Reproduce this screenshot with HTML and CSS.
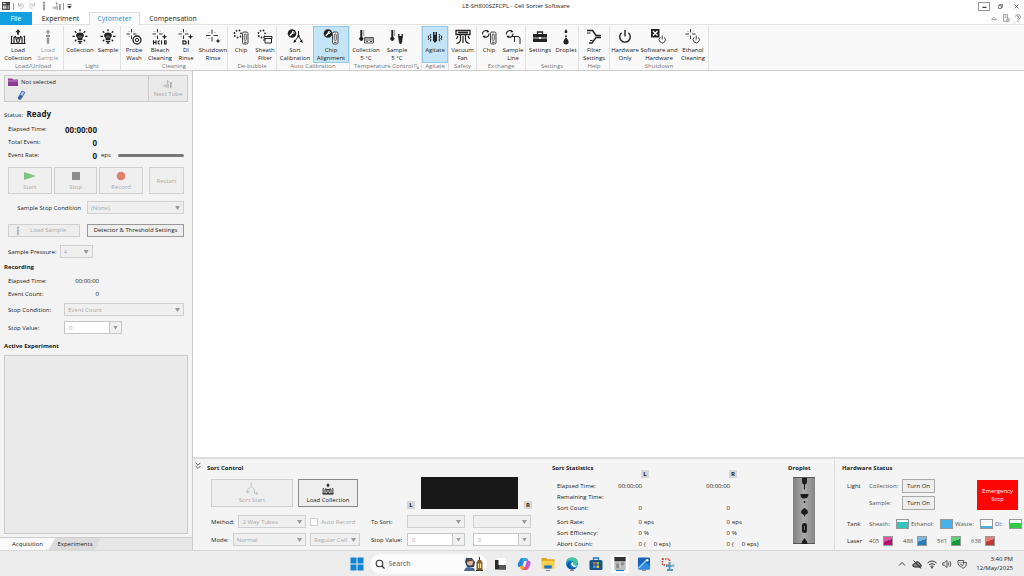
FILE: index.html
```html
<!DOCTYPE html>
<html lang="en">
<head>
<meta charset="utf-8">
<title>LE-SH800SZFCPL - Cell Sorter Software</title>
<link rel="stylesheet" href="styles.css">
</head>
<body>
<svg class="defs" width="0" height="0" aria-hidden="true">
  <symbol id="spark" viewBox="0 0 16 16"><path d="M5.500 0v3.500M5.500 6.500V10M.5 5h3.500M7 5h3.500" fill="none" stroke="#333" stroke-width="1"/><path d="M2.500 2l.8.8M8.500 2l-.8.8M2.500 8l.8-.8" stroke="#666" stroke-width=".8"/></symbol>
  <symbol id="bulb" viewBox="0 0 16 16"><path d="M8 3.500c4.200 0 5 3.600 2.400 5.600v2H5.600v-2C3 7.100 3.800 3.500 8 3.500z" fill="#222"/><path d="M7 9V6.500M9 9V6.500" stroke="#ddd" stroke-width=".6"/><path d="M5.800 12.300h4.400M6.700 14h2.600M8 .3v2M2.800 2.300l1.500 1.500M13.200 2.300l-1.500 1.500M.5 7.300h2.400M13.100 7.300h2.400M2.800 12.300l1.500-1.500M13.200 12.300l-1.500-1.500" stroke="#222" stroke-width="1.300"/></symbol>
  <symbol id="dots" viewBox="0 0 16 16"><g fill="#222"><circle cx="1.500" cy="4" r=".9"/><circle cx="3.500" cy="1.800" r=".9"/><circle cx="6.500" cy="1.500" r=".9"/><circle cx="1.800" cy="7" r=".9"/><circle cx="4.500" cy="8.500" r=".9"/><circle cx="7.500" cy="7.500" r=".9"/><circle cx="8" cy="4.300" r=".9"/></g></symbol>
  <symbol id="chip" viewBox="0 0 16 16"><rect x="9.500" y="3" width="5.500" height="12" rx="1.500" fill="#eee" stroke="#444" stroke-width="1"/><rect x="11.300" y="5" width="2" height="6.500" rx="1" fill="none" stroke="#444" stroke-width=".8"/><path d="M11 13.300h2.600" stroke="#444"/></symbol>
  <symbol id="wrench" viewBox="0 0 16 16"><circle cx="5" cy="4.500" r="4.300" fill="#222"/><path d="M2.800 6.700l2.700-2.700" stroke="#fff" stroke-width="1.300"/><circle cx="6.200" cy="3.400" r="1.400" fill="#fff"/><path d="M6.200 3.400l1.600-1.600" stroke="#222"/></symbol>
  <symbol id="cycle" viewBox="0 0 16 16"><path d="M1.500 5.500a3.300 3.300 0 0 1 5.500-3M8 4.500a3.300 3.300 0 0 1-5.200 3" stroke="#222" stroke-width="1.100" fill="none"/><path d="M6.200.8l2.300 2.200-3 .6zM3.500 9.300L1.300 7l3-.5z" fill="#222"/></symbol>
  <symbol id="power" viewBox="0 0 16 16"><path d="M4.600 3.800a5.300 5.300 0 1 0 6.800 0M8 1v6.500" fill="none" stroke="#222" stroke-width="1.400"/></symbol>
  <symbol id="rack" viewBox="0 0 16 16"><path d="M8 .3l2.700 3H8.900v2.500H7.100V3.300H5.300z" fill="#222"/><path d="M2.500 7.300h-1v7.200h13V7.300h-1M4 14V8.500l1.500-1 1.800 6.300M12 14V8.500l-1.500-1-1.800 6.300M7 8l1 2 1-2M.5 14.500h15" fill="none" stroke="#222" stroke-width="1.200"/></symbol>
  <symbol id="tube" viewBox="0 0 16 16"><path d="M8 .5l2.600 2.900H5.400zM7.300 3h1.400v2.500H7.300z" fill="currentColor"/><path d="M6 6h4v2H6zM6.700 8.500h2.600v5.500L8 15.500 6.700 14z" fill="currentColor"/></symbol>
  <symbol id="nexttube" viewBox="0 0 16 16"><path d="M0 11h5M3.500 9l2 2-2 2M6.500 14V8h2v6M7.500 7V3" fill="none" stroke="currentColor" stroke-width="1.200"/><path d="M5.500 4L7.500 1.500 9.500 4zM10.500 5h4v1.500h-.7V13l-1.300 2-1.300-2V6.500h-.7z" fill="currentColor"/></symbol>
  <symbol id="plus" viewBox="0 0 16 16"><path d="M12.500 5l.8 2 2 .8-2 .8-.8 2-.8-2-2-.8 2-.8z" fill="#222"/></symbol>
  <symbol id="thermo" viewBox="0 0 16 16"><path d="M2.300 1h2v7a2 2 0 1 1-2 0z" fill="#222"/><path d="M5 2h1.300M5 4h1.300M5 6h1.300" stroke="#222" stroke-width=".7"/></symbol>
</svg>

<header>
  <div class="titlebar">
    <div class="quick">
      <svg class="i8" viewBox="0 0 10 10"><path d="M0 0h10v10H0z" fill="#444"/><path d="M1 4h5v5H1zM7 4h2v5H7z" fill="#999"/><path d="M2 5v3M4 6v2M1 2h4" stroke="#fff"/></svg>
      <i class="bar"></i>
      <svg class="i8" viewBox="0 0 10 10"><path d="M2 1v4h4M2 5c2-4 7-3 6 0-.5 2-2 3-4 4" stroke="#aaa" fill="none"/></svg>
      <svg class="i8" viewBox="0 0 10 10"><path d="M8 1v4H4M8 5C6 1 1 2 2 5c.5 2 2 3 4 4" stroke="#bbb" fill="none"/></svg>
      <svg class="i10 grey" viewBox="0 0 16 16"><use href="#tube"/></svg>
      <svg class="i10 grey" viewBox="0 0 16 16"><use href="#nexttube"/></svg>
      <i class="bar last"></i>
      <svg class="i5" viewBox="0 0 6 6"><path d="M.5.500h5M1 2.800h4L3 5z" stroke="#222" stroke-width=".8" fill="#222"/></svg>
    </div>
    <h1>LE-SH800SZFCPL - Cell Sorter Software</h1>
    <div class="winbtns">
      <button class="min" aria-label="Minimize"><svg class="i5" viewBox="0 0 6 6"><path d="M.5 4h5" stroke="#333" stroke-width="1.400"/></svg></button>
      <button aria-label="Restore"><svg class="i5" viewBox="0 0 6 6"><path d="M.5 2h3.500v3.500H.5zM2 2V.5h3.500V4H4" fill="none" stroke="#555" stroke-width=".9"/></svg></button>
      <button aria-label="Close"><svg class="i5" viewBox="0 0 6 6"><path d="M.7.700l4.600 4.600M5.300.700L.7 5.300" stroke="#555"/></svg></button>
    </div>
  </div>
  <nav class="tabs">
    <button class="file">File</button>
    <button class="t1">Experiment</button>
    <button class="t2 active">Cytometer</button>
    <button class="t3">Compensation</button>
    <div class="help">
      <svg class="i8" viewBox="0 0 10 10"><path d="M2 7l3-3 3 3z" fill="none" stroke="#888"/></svg>
      <svg class="i8" viewBox="0 0 10 10"><path d="M2 .5h5V9H2zM3.500 2.500h2M3.500 4.500h2" fill="none" stroke="#888"/><circle cx="7.500" cy="7.500" r="2" fill="#ccc" stroke="#888" stroke-width=".7"/></svg>
      <svg class="i8" viewBox="0 0 10 10"><path d="M3 3.500a2 2 0 1 1 3 1.800L5 6.500M5 8v1.500" fill="none" stroke="#999" stroke-width="3"/><path d="M3 3.500a2 2 0 1 1 3 1.800L5 6.500M5 8v1.200" fill="none" stroke="#fff"/></svg>
    </div>
  </nav>
  <div class="ribbon">
    <section class="group"><div class="btns">
      <button class="w30"><svg viewBox="0 0 16 16"><use href="#rack"/></svg>Load<br>Collection</button>
      <button class="w30" disabled><svg viewBox="0 0 16 16"><use href="#tube"/></svg>Load<br>Sample</button>
    </div><h2>Load/Unload</h2></section>
    <section class="group"><div class="btns">
      <button class="w32"><svg viewBox="0 0 16 16"><use href="#bulb"/></svg>Collection</button>
      <button class="w24"><svg viewBox="0 0 16 16"><use href="#bulb"/></svg>Sample</button>
    </div><h2>Light</h2></section>
    <section class="group"><div class="btns">
      <button class="w26"><svg viewBox="0 0 16 16"><use href="#spark"/><circle cx="11" cy="11" r="4" fill="#f9f9f9" stroke="#222" stroke-width="1.300"/><circle cx="11" cy="11" r="1.600" fill="none" stroke="#222"/></svg>Probe<br>Wash</button>
      <button class="w26"><svg viewBox="0 0 16 16"><use href="#spark"/><use href="#plus"/><path d="M1.500 11.300v4.200M4 11.300v4.200M1.500 13.400H4M7.800 12c-2-.8-2.400 3.300 0 3M9.500 11.300v4.200M12.500 11.800h1.600v3.200h-1.600z" fill="none" stroke="#222" stroke-width="1.100"/></svg>Bleach<br>Cleaning</button>
      <button class="w26"><svg viewBox="0 0 16 16"><use href="#spark"/><use href="#plus"/><path d="M5 11.800V15h1c3 0 3-3.200 0-3.200zM10.500 11.300v4.200" fill="none" stroke="#222" stroke-width="1.200"/></svg>DI<br>Rinse</button>
      <button class="w28"><svg viewBox="0 0 16 16"><path d="M7 .5V5M7 8v4.500M1 6.500h4.500M8.500 6.500H13" stroke="#333"/><path d="M3.500 3l1 1M10.500 3l-1 1M3.500 10l1-1" stroke="#666" stroke-width=".8"/><path d="M13 9.500l.7 1.800 1.800.7-1.800.7-.7 1.800-.7-1.800-1.800-.7 1.800-.7z" fill="#222"/></svg>Shutdown<br>Rinse</button>
    </div><h2>Cleaning</h2></section>
    <section class="group"><div class="btns">
      <button class="w26"><svg viewBox="0 0 16 16"><use href="#dots"/><use href="#chip"/></svg>Chip</button>
      <button class="w22"><svg viewBox="0 0 16 16"><use href="#dots"/><path d="M7 7.500h8v2H7zM8 9.500h6.500V14H8zM6 11h2" fill="#fff" stroke="#222"/></svg>Sheath<br>Filter</button>
    </div><h2>De-bubble</h2></section>
    <section class="group"><div class="btns">
      <button class="w36"><svg viewBox="0 0 16 16"><use href="#wrench"/><path d="M11.500 2v5L8 12M11.500 7l3 5" stroke="#222" fill="none"/><path d="M6.500 14l.5-3.500 2.500 2zM15.800 14l-.6-3.500-2.500 2z" fill="#222"/><circle cx="11.500" cy="7" r="1.200" fill="#222"/></svg>Sort<br>Calibration</button>
      <button class="w36 on" aria-pressed="true"><svg viewBox="0 0 16 16"><use href="#wrench"/><use href="#chip"/></svg>Chip<br>Alignment</button>
    </div><h2>Auto Calibration</h2></section>
    <section class="group"><div class="btns">
      <button class="w32"><svg viewBox="0 0 16 16"><use href="#thermo"/><path d="M6.500 14V8.500h9V14zM8 9v3l1 1 1-1V9M12 9v3l1 1 1-1V9" fill="none" stroke="#444" stroke-width=".9"/></svg>Collection<br>5 °C</button>
      <button class="w30"><svg viewBox="0 0 16 16"><use href="#thermo"/><path d="M9.500 5v2l1 7 1 1 1-1 1-7V5" fill="#222" stroke="#222" stroke-width=".8"/><path d="M10.500 5h2v2h-2z" fill="#fff"/></svg>Sample<br>5 °C</button>
    </div><div class="foot"><h2>Temperature Control</h2><svg class="i5" viewBox="0 0 6 6"><path d="M.5 4V.5H4M2.500 2.500L5 5M5.500 3v2.500H3" fill="none" stroke="#888" stroke-width=".8"/></svg></div></section>
    <section class="group"><div class="btns">
      <button class="w26 on" aria-pressed="true"><svg viewBox="0 0 16 16"><path d="M6 3h4v8.500L8 14l-2-2.500z" fill="#222"/><path d="M8 3v3" stroke="#c4e5f8"/><path d="M4 5L3.200 6.500 4 8l-.8 1.500.8 1.500-.8 1.500M1.800 6.500L1.200 8l.6 1.500-.6 1.500M12 5l.8 1.500L12 8l.8 1.500L12 11l.8 1.500M14.200 6.500l.6 1.500-.6 1.500.6 1.500" stroke="#222" fill="none"/></svg>Agitate</button>
    </div><h2>Agitate</h2></section>
    <section class="group"><div class="btns">
      <button class="w27"><svg viewBox="0 0 16 16"><path d="M1 1.500h14v4H1zM3 3.500h10" fill="none" stroke="#222" stroke-width="1.300"/><path d="M5.500 6v4q0 4-4 4.500M10.500 6v4q0 4 4 4.500M8 7v7M3 7l-1.500 3M13 7l1.500 3" fill="none" stroke="#222" stroke-width="1.200"/></svg>Vacuum<br>Fan</button>
    </div><h2>Safety</h2></section>
    <section class="group"><div class="btns">
      <button class="w24"><svg viewBox="0 0 16 16"><use href="#cycle"/><use href="#chip"/></svg>Chip</button>
      <button class="w24"><svg viewBox="0 0 16 16"><use href="#cycle"/><path d="M6 7.500h7q2 0 2 2V15M9.500 7.500V13" fill="none" stroke="#222"/></svg>Sample<br>Line</button>
    </div><h2>Exchange</h2></section>
    <section class="group"><div class="btns">
      <button class="w28"><svg viewBox="0 0 16 16"><path d="M5.500 5V3h5v2" fill="none" stroke="#222" stroke-width="1.300"/><path d="M1 5h14v8H1z" fill="#222"/><path d="M1 9h14" stroke="#fff" stroke-width=".8"/><path d="M7 8h2v2H7z" fill="#fff"/></svg>Settings</button>
      <button class="w24"><svg viewBox="0 0 16 16"><path d="M8 0c2 3 1.800 4 0 4s-2-1 0-4zM8 5.500l1 2-1 1-1-1z" fill="#222"/><path d="M8 8.500c4 4 3 7 0 7s-4-3 0-7z" fill="#222"/></svg>Droplet</button>
    </div><h2>Settings</h2></section>
    <section class="group"><div class="btns">
      <button class="w30"><svg viewBox="0 0 16 16"><path d="M1 1.500h5.500l3.500 5h5M3 14h3l4-5.500h5" fill="none" stroke="#222" stroke-width="1.400"/><path d="M1 4h3.500M4 11.500h2.500" stroke="#222"/></svg>Filter<br>Settings</button>
    </div><h2>Help</h2></section>
    <section class="group"><div class="btns">
      <button class="w30"><svg viewBox="0 0 16 16"><use href="#power"/></svg>Hardware<br>Only</button>
      <button class="w38"><svg viewBox="0 0 16 16"><path d="M0 0h8.500v8.500H0z" fill="#222"/><path d="M2 2l4.500 4.500M6.500 2L2 6.500" stroke="#fff" stroke-width="1.300"/><use href="#power" x="6.500" y="6" width="9.500" height="9.500"/></svg>Software and<br>Hardware</button>
      <button class="w30"><svg viewBox="0 0 16 16"><use href="#spark"/><use href="#power" x="6.500" y="6" width="9.500" height="9.500"/></svg>Ethanol<br>Cleaning</button>
    </div><h2>Shutdown</h2></section>
  </div>
</header>

<div class="work">
  <aside class="side">
    <div class="tubebox">
      <div class="sel">
        <div class="line"><svg class="i10" viewBox="0 0 10 10"><path d="M0 1.500h4l1 1h5v6.500H0z" fill="#8d3a93"/><path d="M0 4h10" stroke="#c489c8"/></svg>Not selected</div>
        <svg class="i10 blue" viewBox="0 0 10 10"><path d="M6 1l3 1.500L4.500 9.300Q2 10 2.300 7.500z" fill="#aac4e8" stroke="#3c5b9a" stroke-width=".8"/><path d="M4.500 5l2.500 1-2.500 3.300Q2 10 2.300 7.500z" fill="#3c5b9a"/></svg>
      </div>
      <button disabled><svg class="i10" viewBox="0 0 16 16"><use href="#nexttube"/></svg>Next Tube</button>
    </div>
    <div class="status">Status: <strong>Ready</strong></div>
    <dl class="stats">
      <dt>Elapsed Time:</dt><dd class="big">00:00:00</dd><dd></dd>
      <dt>Total Event:</dt><dd class="big">0</dd><dd></dd>
      <dt>Event Rate:</dt><dd class="big">0</dd><dd class="rate">eps<i></i></dd>
    </dl>
    <div class="runbtns">
      <button disabled><svg class="i12" viewBox="0 0 12 12"><path d="M0 2l12 4-12 4z" fill="#7fc584"/></svg>Start</button>
      <button disabled><svg class="i12" viewBox="0 0 12 12"><path d="M2 2h8v8H2z" fill="#8b8b8b"/></svg>Stop</button>
      <button disabled><svg class="i12" viewBox="0 0 12 12"><circle cx="6" cy="6" r="4.300" fill="#dd8068"/></svg>Record</button>
      <button class="restart" disabled>Restart</button>
    </div>
    <div class="row stopcond"><label for="ssc">Sample Stop Condition</label><span class="pick w97"><select id="ssc" disabled><option>(None)</option></select></span></div>
    <div class="row loads">
      <button class="load" disabled><svg class="i10" viewBox="0 0 16 16"><use href="#tube"/></svg>Load Sample</button>
      <button class="det">Detector &amp; Threshold Settings</button>
    </div>
    <div class="row press"><label for="sp">Sample Pressure:</label><span class="pick w33"><select id="sp" disabled><option>4</option></select></span></div>
    <h3>Recording</h3>
    <dl class="rec"><dt>Elapsed Time:</dt><dd>00:00:00</dd><dt>Event Count:</dt><dd>0</dd></dl>
    <div class="recform">
      <label for="sc">Stop Condition:</label><span class="pick"><select id="sc" disabled><option>Event Count</option></select></span>
      <label for="sv">Stop Value:</label><span class="combo w58"><input id="sv" value="0" disabled><button aria-label="Choose value"></button></span>
    </div>
    <h3>Active Experiment</h3>
    <div class="expbox"></div>
    <div class="sidetabs"><button class="a">Acquisition</button><button class="b">Experiments</button></div>
  </aside>

  <div class="right">
    <main></main>
    <div class="dock">
      <button class="fold" aria-label="Collapse"><svg class="i8" viewBox="0 0 10 10"><path d="M2 1l3 3 3-3M2 5l3 3 3-3" fill="none" stroke="#333"/></svg></button>
      <section class="sortctl">
        <h3>Sort Control</h3>
        <div class="scgrid">
          <div class="sc1">
            <div class="bigbtns">
              <button class="start" disabled><svg class="i14" viewBox="0 0 16 16"><path d="M7 1v4M7 5L3 9v3M7 5l4 4v4h3M1.500 10.500L3 13l1.500-2.500M12.500 11.500L15 13l-2.500 1.500" fill="none" stroke="#b5c4be"/></svg>Sort Start</button>
              <button><svg class="i12" viewBox="0 0 16 16"><use href="#rack"/></svg>Load Collection</button>
            </div>
            <div class="row"><label for="me">Method:</label><span class="pick grow"><select id="me" disabled><option>2 Way Tubes</option></select></span><span class="w50"><label class="chk"><input type="checkbox" disabled>Auto Record</label></span></div>
            <div class="row"><label for="mo">Mode:</label><span class="pick grow"><select id="mo" disabled><option>Normal</option></select></span><span class="pick w50"><select aria-label="Cell mode" disabled><option>Regular Cell</option></select></span></div>
          </div>
          <div class="sc2">
            <div class="view"><b class="badge">L</b><div class="screen"></div><b class="badge">R</b></div>
            <div class="row"><label for="ts">To Sort:</label><span class="pick w58"><select id="ts" disabled><option></option></select></span><span class="pick w58"><select aria-label="To sort right" disabled><option></option></select></span></div>
            <div class="row"><label for="sl">Stop Value:</label><span class="combo w58"><input id="sl" value="0" disabled><button aria-label="Choose left value"></button></span><span class="combo w58"><input aria-label="Stop value right" value="0" disabled><button aria-label="Choose right value"></button></span></div>
          </div>
        </div>
      </section>
      <section class="sortstat">
        <h3>Sort Statistics</h3>
        <table>
          <colgroup><col class="c-name"><col class="c-num"><col class="c-unit"><col class="c-num"><col class="c-unit"></colgroup>
          <thead><tr><td></td><th colspan="2"><b class="badge">L</b></th><th colspan="2"><b class="badge">R</b></th></tr></thead>
          <tbody>
          <tr><th>Elapsed Time:</th><td>00:00:00</td><td></td><td>00:00:00</td><td></td></tr>
          <tr><th>Remaining Time:</th><td></td><td></td><td></td><td></td></tr>
          <tr><th>Sort Count:</th><td>0</td><td></td><td>0</td><td></td></tr>
          </tbody>
          <tbody>
          <tr><th>Sort Rate:</th><td>0</td><td>eps</td><td>0</td><td>eps</td></tr>
          <tr><th>Sort Efficiency:</th><td>0</td><td>%</td><td>0</td><td>%</td></tr>
          <tr><th>Abort Count:</th><td>0</td><td>(<span class="ab">0 eps)</span></td><td>0</td><td>(<span class="ab">0 eps)</span></td></tr>
          </tbody>
        </table>
      </section>
      <section class="drop">
        <h3>Droplet</h3>
        <svg viewBox="0 0 22 67"><defs><linearGradient id="dg"><stop offset="0" stop-color="#808080"/><stop offset=".5" stop-color="#aaa"/><stop offset="1" stop-color="#858585"/></linearGradient></defs><path d="M0 0h22v67H0z" fill="url(#dg)"/><path d="M0 .5h22M0 66.500h22" stroke="#555"/><g fill="#1c1c1c"><path d="M9 1h5v4q0 2-2 2.500v5h-1v-5Q9 7 9 5z"/><path d="M7.500 17h8q0 4-4 4.500t-4-4.500z"/><circle cx="11.500" cy="25" r="1"/><path d="M11.500 31q3.500 2 3.500 4 0 2-2.500 2.500l-1 2.500-1-2.500Q8 37 8 35q0-2 3.500-4z"/><rect x="9" y="46" width="5" height="10" rx="2.500"/><path d="M11.500 61q3 3 3 6h-6q0-3 3-6z"/></g><path d="M11.500 49v4" stroke="#777"/></svg>
      </section>
      <section class="hw">
        <h3>Hardware Status</h3>
        <div class="hwtop">
          <div class="lights">
            <span>Light</span><span class="dim">Collection:</span><button>Turn On</button>
            <span></span><span class="dim">Sample:</span><button>Turn On</button>
          </div>
          <button class="stop">Emergency<br>Stop</button>
        </div>
        <div class="tank"><span>Tank</span><span class="t">Sheath:<i class="c1"></i></span><span class="t">Ethanol:<i class="c2"></i></span><span class="t">Waste:<i class="c3"></i></span><span class="t">DI:<i class="c4"></i></span></div>
        <div class="laser"><span>Laser</span><span class="t">405<i class="l1"></i></span><span class="t">488<i class="l2"></i></span><span class="t">561<i class="l3"></i></span><span class="t">638<i class="l4"></i></span></div>
      </section>
    </div>
  </div>
</div>

<footer class="taskbar">
  <span></span>
  <div class="apps">
    <svg class="i14" viewBox="0 0 14 14"><path d="M.5.500h6v6h-6zM7.500.500h6v6h-6zM.5 7.500h6v6h-6zM7.500 7.500h6v6h-6z" fill="#1184d6"/></svg>
    <label class="search"><svg class="i10" viewBox="0 0 10 10"><circle cx="4.500" cy="4.500" r="3.300" fill="none" stroke="#333" stroke-width="1.100"/><path d="M7 7l2.500 2.500" stroke="#333" stroke-width="1.200"/></svg><input type="text" placeholder="Search" aria-label="Search">
      <svg class="art" viewBox="0 0 20 14"><path d="M2 1h6l3 4-1 5H3L1 5z" fill="#344761"/><circle cx="6" cy="5.500" r="3" fill="#e2b79d"/><path d="M0 14q1-4 5-4l5 1 1 3z" fill="#4c6890"/><path d="M3 4L8 3" stroke="#6a3426" stroke-width="1.500"/><path d="M12.500 5h6v8h-6zM14 3h3l1 2h-5z" fill="#81602d"/><path d="M14 6.500h1.200V11H14zM16 6.500h1.200V11H16z" fill="#fbe3a0"/><path d="M15.500 0v3M12 13.500h7" stroke="#443118"/></svg></label>
    <svg class="i14" viewBox="0 0 14 14"><path d="M4 1h9v8H4z" fill="#fff"/><path d="M2 3h3.500v5H13v4.500H2z" fill="#2a2a2a"/><path d="M6 8h7v4.500H6z" fill="#555"/></svg>
    <svg class="i14" viewBox="0 0 14 14"><path d="M4 1h5l1.500 3H7L5 10H2Q0 9 1 6z" fill="#2686e0"/><path d="M9 1q2 0 2.500 3H13q1 1 .5 3l-1.500 4-2 2H5l3-3 2-7z" fill="#c35ad0"/><path d="M3 9h4l-1 4H5Q3 12 3 9z" fill="#f2a12c"/><path d="M7 10h4l-2 3H6z" fill="#ee5870"/><path d="M5 1h4l1 2.500H7L6 6z" fill="#20b6c9"/></svg>
    <svg class="i14 run" viewBox="0 0 14 14"><path d="M0 1h5l1.500 1.500H14V6H0z" fill="#dda21d"/><path d="M0 4h14v8.500H0z" fill="#fbcf4c"/><path d="M3 9h8v3.500H3z" fill="#2175c5"/></svg>
    <svg class="i14 run" viewBox="0 0 14 14"><circle cx="7" cy="7" r="6.500" fill="#1684cd"/><path d="M1 5Q3 0 8 .6q5 .8 5.500 5.400Q13 9 9 8.500q1-3-2-4.500-4-1-6 1z" fill="#40c6a0"/><path d="M6 5q-3 4 1 6.500 3 1 5-.5-2 3-5.500 2.500Q1 12 2 7.500 3.500 5 6 5z" fill="#0d57a8"/><path d="M7.500 5.500q2 1.500 1 3.200 2 1 4-.2L12 10q-3 1.500-5-.5t.5-4z" fill="#fff"/></svg>
    <svg class="i14" viewBox="0 0 14 14"><path d="M4.500 3V1h5v2" fill="none" stroke="#1f79c4" stroke-width="1.300"/><rect x=".5" y="3" width="13" height="10" rx="1.500" fill="#17558f"/><path d="M4 5h2.500v2.500H4z" fill="#f05a3c"/><path d="M7.500 5H10v2.500H7.500z" fill="#8ac43f"/><path d="M4 8.500h2.500V11H4z" fill="#35a5ec"/><path d="M7.500 8.500H10V11H7.500z" fill="#fbc02d"/></svg>
    <svg class="i14 run cur" viewBox="0 0 14 14"><path d="M1 0h12v14H1z" fill="#bbb"/><path d="M1 0h12v4.500H1z" fill="#333"/><path d="M3 7h3v5H3zM8 6h3v3H8z" fill="#888"/><path d="M7 5v7" stroke="#ddd"/></svg>
    <svg class="i14 run" viewBox="0 0 14 14"><rect x=".5" y=".5" width="13" height="13" rx="1.500" fill="#1c62bd"/><path d="M.5 11L8 4.500 13.500 10v2.500l-1 1H2z" fill="#2f8ddd"/><path d="M1 12L10 3" stroke="#8fd0ff" stroke-width="1.500"/><circle cx="10.500" cy="3.500" r="1.300" fill="#fff"/></svg>
    <svg class="i14" viewBox="0 0 14 14"><path d="M1.500 2h7v6h-7z" fill="none" stroke="#cc4a3c" stroke-width="1.500" stroke-dasharray="1.500 1"/><path d="M8.500 5v8M5 9h8M6 13h6" stroke="#5498bf" stroke-width="1.800"/><circle cx="12" cy="8.500" r="1.600" fill="#87bdd8"/></svg>
  </div>
  <div class="tray">
    <svg class="i10" viewBox="0 0 10 10"><path d="M2 6.500l3-3 3 3" fill="none" stroke="#333"/></svg>
    <svg class="i10" viewBox="0 0 10 10"><path d="M2.500 8Q0 7.500 1 5.500q.5-1 1.800-1Q4 1.800 6.500 3 8 3.800 7.800 5q1.800.3 1.500 2-.3 1-1.500 1z" fill="#888" stroke="#222"/><path d="M1.500 1.500l7.500 8" stroke="#222"/></svg>
    <svg class="i10" viewBox="0 0 10 10"><path d="M.5 4q4.500-4 9 0M2 5.800q3-2.600 6 0M3.500 7.500q1.500-1.300 3 0" fill="none" stroke="#333"/><circle cx="5" cy="8.600" r=".9" fill="#333"/></svg>
    <svg class="i10" viewBox="0 0 10 10"><path d="M.8 3.800h1.700L5 1.500v7L2.500 6.200H.8zM6.300 3.500q1.200 1.500 0 3M7.800 2q2.200 3 0 6" fill="none" stroke="#333" stroke-width=".8"/></svg>
    <svg class="i10" viewBox="0 0 10 10"><path d="M1 1.500h5.500v3Q6 7 3.800 7.500 1.500 7 1 4.500zM4.500 8.500q1.500 1 2.500.5 2.500-1.500 2.500-5.500h-3" fill="none" stroke="#333" stroke-width=".8"/><path d="M2.500 3.500h1M4.500 3.500h1M2.800 5.500q1-.8 2 0" stroke="#333" stroke-width=".7" fill="none"/></svg>
    <time>3:40 PM<br>12/May/2025</time>
  </div>
</footer>
</body>
</html>
```
FILE: styles.css
```css
* { box-sizing: border-box; }
body {
  margin: 0;
  min-height: 100vh;
  display: flex;
  flex-direction: column;
  font: 6px/8px "Open Sans", "Noto Sans", sans-serif;
  color: #222;
  background: #fff;
}
button, input, select { font: inherit; color: inherit; margin: 0; padding: 0; border-radius: 0; }
button { background: none; border: 0; white-space: nowrap; }
h1, h2, h3, dl, dd { margin: 0; font-size: inherit; }
svg { display: block; flex: none; }
.defs { position: absolute; }
.i5 { width: 5px; height: 5px; }
.i8 { width: 8px; height: 8px; }
.i10 { width: 10px; height: 10px; }
.i12 { width: 12px; height: 12px; }
.i14 { width: 14px; height: 14px; }
.grey { color: #888; }

/* title bar and tabs */
.titlebar { display: grid; grid-template-columns: 1fr auto 1fr; align-items: center; height: 12px; padding-left: 2px; }
.titlebar h1 { font-weight: 400; padding-left: 6px; }
.quick { display: flex; align-items: center; gap: 3px; }
.bar { width: 1px; height: 7px; background: #999; }
.last { margin-left: -2px; }
.winbtns { display: flex; justify-content: flex-end; gap: 4px; padding-right: 2px; }
.winbtns button { width: 12px; height: 9px; display: flex; align-items: center; justify-content: center; border: 1px solid transparent; }
.winbtns .min { border-color: #999; }
.tabs { display: flex; height: 13px; font-size: 7px; border-bottom: 1px solid #e2e2e2; }
.tabs button { height: 13px; line-height: 12px; }
.tabs .file { width: 32px; background: #119fdf; color: #fff; }
.tabs .t1 { width: 57px; }
.tabs .t2 { width: 51px; }
.tabs .t3 { width: 66px; }
.tabs .active { color: #2a93c9; background: #fafafa; border: 1px solid #ddd; border-bottom: 0; }
.help { margin-left: auto; display: flex; gap: 4px; padding: 2px 2px 0 0; }

.ribbon { display: flex; background: #f9f9f9; border-bottom: 1px solid #ccc; padding: 1px 0 0 3px; }
.group { border-right: 1px solid #e2e2e2; }
.btns { display: flex; height: 37px; }
.btns button { display: flex; flex-direction: column; align-items: center; padding-top: 2px; border: 1px solid transparent; text-align: center; }
.btns svg { width: 16px; height: 16px; margin-bottom: 1px; }
.btns button:disabled { color: #999; }
.btns .on { background: #c4e5f8; border-color: #94c8e6; }
.group h2 { font-weight: 400; color: #777; text-align: center; white-space: nowrap; line-height: 7px; }
.foot { display: flex; align-items: center; justify-content: space-between; padding: 0 2px 0 4px; width: 71px; }
.w22 { width: 22px; } .w24 { width: 24px; } .w26 { width: 26px; } .w27 { width: 27px; }
.w28 { width: 28px; } .w30 { width: 30px; } .w32 { width: 32px; }
.w33 { width: 33px; } .w36 { width: 36px; } .w38 { width: 38px; } .w50 { width: 50px; }
.w58 { width: 58px; } .w97 { width: 97px; }

/* form parts */
.pick { position: relative; display: block; }
.pick select { display: block; appearance: none; width: 100%; height: 13px; border: 1px solid #d0d0d0; background: #efefef; padding: 0 3px; color: #aaa; opacity: 1; }
.pick::after, .combo button::after { content: ""; width: 5px; height: 4px; background: #999; clip-path: polygon(0 0, 100% 0, 50% 100%); }
.pick::after { position: absolute; right: 4px; top: 5px; }
.combo { display: flex; height: 13px; border: 1px solid #c8c8c8; background: #fff; }
.combo input { flex: 1; min-width: 0; border: 0; background: none; padding: 0 4px; color: #aaa; }
.combo button { width: 12px; display: flex; align-items: center; justify-content: center; background: #f0f0f0; border-left: 1px solid #c8c8c8; }
.row { display: flex; align-items: center; white-space: nowrap; }

/* side panel */
.work { flex: 1; display: flex; }
.side { width: 193px; flex: none; display: flex; flex-direction: column; background: #f3f3f3; border-right: 1px solid #ccc; padding: 4px 4px 0; }
.side > h3 { line-height: 10px; }
.tubebox { display: flex; justify-content: space-between; height: 27px; background: #e9e9e9; border: 1px solid #ccc; }
.sel { padding: 1px 3px; }
.line { display: flex; gap: 3px; align-items: center; }
.blue { margin: 3px 0 0 8px; }
.tubebox button { width: 39px; border-left: 1px solid #ccc; display: flex; flex-direction: column; align-items: center; justify-content: center; gap: 1px; color: #aaa; }
.status { margin-top: 7px; line-height: 10px; }
.status strong { font-size: 8px; margin-left: 2px; }
.stats { margin: 3px 0 0 4px; display: grid; grid-template-columns: 46px 43px 1fr; line-height: 13px; }
.stats .big { font-size: 8px; font-weight: 700; text-align: right; }
.rate { display: flex; align-items: center; gap: 7px; padding: 0 4px; }
.rate i { flex: 1; height: 3px; border-radius: 2px; background: #777; }
.runbtns { display: flex; gap: 2px; margin: 5px 4px 0; }
.runbtns button { flex: 1; height: 27px; display: flex; flex-direction: column; align-items: center; justify-content: center; border: 1px solid #d0d0d0; background: #efefef; color: #aaa; gap: 1px; }
.runbtns .restart { flex: none; width: 35px; margin-left: 4px; }
.stopcond { margin: 7px 4px 0; justify-content: flex-end; gap: 6px; }
.loads { margin: 10px 4px 0; gap: 7px; }
.loads button { height: 13px; line-height: 11px; border: 1px solid #999; background: #eee; }
.loads .load { flex: 1; display: flex; align-items: center; gap: 7px; padding-left: 4px; border-color: #d0d0d0; color: #aaa; }
.loads .det { width: 97px; }
.press { margin: 8px 4px 4px; gap: 3px; }
.rec { margin: 3px 0 0 4px; display: grid; grid-template-columns: 50px 41px; line-height: 13px; }
.rec dd { text-align: right; }
.recform { display: grid; grid-template-columns: 50px 1fr; column-gap: 6px; row-gap: 5px; align-items: center; margin: 2px 4px 7px; }
.expbox { flex: 1; margin-top: 4px; background: #e9e9e9; border: 1px solid #ccc; }
.sidetabs { display: flex; margin: 3px -4px 0; height: 13px; background: #e6e6e6; border-top: 1px solid #ccc; }
.sidetabs .a { width: 55px; background: #fafafa; clip-path: polygon(0 0, 100% 0, 87% 100%, 0 100%); }
.sidetabs .b { width: 52px; margin-left: -6px; background: #dcdcdc; clip-path: polygon(13% 0, 100% 0, 87% 100%, 0 100%); }

/* main area and bottom dock */
.right { flex: 1; min-width: 0; display: flex; flex-direction: column; }
main { flex: 1; }
.dock { display: flex; background: #f4f4f4; border-top: 2px solid #ddd; }
.dock h3 { line-height: 10px; }
.dock section { padding-top: 4px; }
.fold { width: 14px; padding: 3px 0 0 1px; align-self: flex-start; }
.sortctl { width: 345px; }
.scgrid { display: flex; gap: 11px; padding: 5px 0 0 4px; }
.sc1 { width: 149px; }
.sc1 .row { gap: 4px; }
.scgrid .row + .row { margin-top: 5px; }
.grow { flex: 1; }
.bigbtns { display: flex; gap: 5px; margin: 1px 2px 8px 0; }
.bigbtns button { flex: 1; height: 28px; display: flex; flex-direction: column; align-items: center; justify-content: flex-end; border: 1px solid #888; background: #eee; padding-bottom: 2px; gap: 1px; }
.bigbtns .start { flex: none; width: 82px; border-color: #d0d0d0; color: #aaa; gap: 0; }
.chk { display: flex; align-items: center; gap: 3px; color: #aaa; }
.chk input { appearance: none; width: 8px; height: 8px; background: #fff; border: 1px solid #d0d0d0; }
.sc2 .row { gap: 8px; }
.sc2 .row label { width: 28px; }
.view { display: flex; align-items: flex-end; gap: 6px; padding-left: 36px; margin: -1px 0 6px; }
.screen { width: 97px; height: 32px; background: #181818; }
.badge { display: inline-block; width: 8px; height: 8px; line-height: 8px; background: #d8d8d8; text-align: center; }
.sortstat { flex: 1; }
.sortstat table { border-collapse: collapse; table-layout: fixed; width: 230px; margin: -3px 0 0 5px; }
.c-name { width: 54px; }
.c-num { width: 31px; }
.c-unit { width: 57px; }
.sortstat th { font-weight: 400; text-align: left; }
.sortstat td, .sortstat th { padding: 0; white-space: nowrap; line-height: 11px; }
.sortstat thead th { padding-left: 30px; line-height: 8px; }
.sortstat thead b { display: block; }
.sortstat tbody td:nth-child(even) { text-align: right; }
.sortstat tbody td:nth-child(odd) { padding-left: 2px; }
.sortstat tbody tr:first-child > * { padding-top: 3px; }
.ab { margin-left: 8px; }
.drop { width: 46px; }
.drop svg { width: 22px; height: 67px; margin: 4px 0 0 5px; }
.hw { width: 190px; border-left: 1px solid #ddd; padding: 0 0 0 7px; }
.hwtop { display: flex; justify-content: space-between; align-items: center; padding: 6px 6px 0 5px; }
.lights { display: grid; grid-template-columns: 22px 33px 33px; row-gap: 3px; align-items: center; white-space: nowrap; }
.lights button { height: 14px; border: 1px solid #aaa; background: #eee; }
.dim, .t { color: #555; }
.stop { width: 41px; height: 30px; background: #fb0505; color: #fff; }
.tank, .laser { display: grid; align-items: center; padding: 9px 2px 0 5px; }
.tank { grid-template-columns: 20px 40px 42px 38px 27px; column-gap: 2px; }
.laser { grid-template-columns: 12px 24px 24px 24px 24px; column-gap: 10px; padding: 7px 2px 3px 5px; }
.t { display: flex; align-items: center; justify-content: space-between; white-space: nowrap; }
.t i { width: 13px; height: 10px; border: 1px solid #999; }
.laser i { width: 10px; }
.c1 { background: linear-gradient(#fff 30%, #35c5ba 30%); }
.c2 { background: #49b1ea; }
.c3 { background: linear-gradient(#fff 80%, #49b1ea 80%); }
.c4 { background: linear-gradient(#fff 40%, #35c84a 40%); }
.l1 { background: linear-gradient(160deg, #d85aa5 45%, #b0106f 45%); }
.l2 { background: linear-gradient(160deg, #7ab8e0 45%, #2a7db8 45%); }
.l3 { background: linear-gradient(160deg, #5fd07c 45%, #129a3a 45%); }
.l4 { background: linear-gradient(160deg, #e08078 45%, #c03a30 45%); }

/* taskbar */
.taskbar { height: 26px; display: grid; grid-template-columns: 1fr auto 1fr; align-items: center; background: #ededed; border-top: 1px solid #d8d8d8; }
.apps { display: flex; align-items: center; gap: 10px; }
.search { display: flex; align-items: center; width: 117px; height: 20px; border-radius: 10px; background: #fbfbfb; padding: 0 3px 0 5px; gap: 4px; margin: 0 -4px; font-size: 7px; }
.search input { flex: 1; min-width: 0; border: 0; background: none; outline: 0; }
.search input::placeholder { color: #555; }
.art { width: 20px; height: 14px; }
.run { padding-bottom: 1px; background: linear-gradient(#888, #888) center bottom / 4px 1px no-repeat; }
.cur { background: linear-gradient(#1479c9, #1479c9) center bottom / 8px 1px no-repeat #fafafa; box-shadow: 0 0 0 2px #fafafa; }
.tray { display: flex; justify-content: flex-end; align-items: center; gap: 5px; padding-right: 11px; }
.tray time { text-align: right; margin-left: 4px; line-height: 9px; }
```
